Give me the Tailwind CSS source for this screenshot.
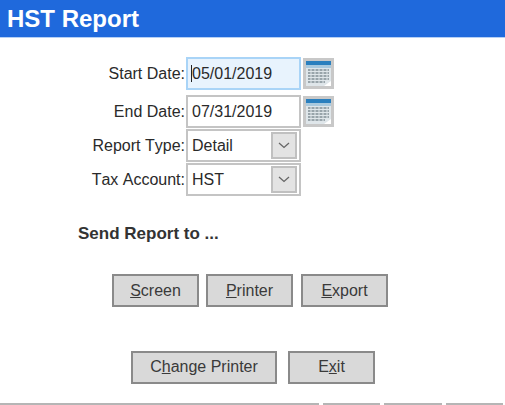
<!DOCTYPE html>
<html lang="en">
<head>
    <meta charset="UTF-8">
    <title>HST Report</title>
    <script src="https://cdn.jsdelivr.net/npm/@tailwindcss/browser@4"></script>
</head>
<body class="bg-white font-['Liberation_Sans',Arial,sans-serif] [font-kerning:none] text-[#2a2a2a] w-[505px] h-[405px] overflow-hidden flex flex-col">
    <div class="bg-[#1f69dc] h-[37px] pl-[7px] flex items-center text-white text-[24px] font-bold shrink-0">HST Report</div>
    <div class="h-px bg-[#b5d0f5] shrink-0"></div>

    <div class="flex flex-col items-start pl-[75px] pt-[19px] shrink-0">
        <!-- start date -->
        <div class="flex items-center h-[33px]">
            <span class="w-[111px] pr-px text-right text-[16px]">Start Date:</span>
            <div class="w-[115px] h-[33px] border-2 border-[#a9d4f7] bg-[#e8f3fd] flex items-center pl-[3px] text-[16px]"><span class="w-px h-[17px] bg-[#222]"></span>05/01/2019</div>
            <svg class="ml-[2px]" width="31" height="31" viewBox="0 0 31 31">
                <rect width="31" height="31" fill="#c8c8c8"/>
                <rect x="3" y="3" width="25" height="25" fill="#dfe6ea"/>
                <rect x="3" y="3" width="25" height="4" fill="#2a7fbe"/>
                <rect x="3" y="7" width="25" height="3" fill="#a9c9de"/>
                <path d="M5 12h21M5 15h21M5 18h21M5 21h21M5 24h17" stroke="#98a4aa" stroke-width="2"/>
                <path d="M8 11v15M12 11v15M16 11v15M20 11v15M24 11v11" stroke="#dfe6ea" stroke-width="1"/>
                <path d="M21 28l7-5v5z" fill="#fff"/>
            </svg>
        </div>
        <!-- end date -->
        <div class="flex items-center h-[33px] mt-[5px]">
            <span class="w-[111px] pr-px text-right text-[16px]">End Date:</span>
            <div class="w-[115px] h-[33px] border-2 border-[#c4c4c4] flex items-center pl-[4px] text-[16px]">07/31/2019</div>
            <svg class="ml-[2px]" width="31" height="31" viewBox="0 0 31 31">
                <rect width="31" height="31" fill="#c8c8c8"/>
                <rect x="3" y="3" width="25" height="25" fill="#dfe6ea"/>
                <rect x="3" y="3" width="25" height="4" fill="#2a7fbe"/>
                <rect x="3" y="7" width="25" height="3" fill="#a9c9de"/>
                <path d="M5 12h21M5 15h21M5 18h21M5 21h21M5 24h17" stroke="#98a4aa" stroke-width="2"/>
                <path d="M8 11v15M12 11v15M16 11v15M20 11v15M24 11v11" stroke="#dfe6ea" stroke-width="1"/>
                <path d="M21 28l7-5v5z" fill="#fff"/>
            </svg>
        </div>
        <!-- report type -->
        <div class="flex items-center h-[33px] mt-px">
            <span class="w-[111px] pr-px text-right text-[16px]">Report Type:</span>
            <div class="w-[115px] h-[33px] border-2 border-[#c4c4c4] flex items-center justify-between pl-[4px] pr-[2px] text-[16px]">
                <span>Detail</span>
                <span class="w-[26px] h-[27px] bg-[#e3e3e3] border-2 border-[#c0c0c0] flex items-center justify-center">
                    <svg width="12" height="7" viewBox="0 0 12 7" fill="none"><path d="M1 1l5 4.5L11 1" stroke="#666" stroke-width="1.3"/></svg>
                </span>
            </div>
        </div>
        <!-- tax account -->
        <div class="flex items-center h-[33px] mt-px">
            <span class="w-[111px] pr-px text-right text-[16px]">Tax Account:</span>
            <div class="w-[115px] h-[33px] border-2 border-[#c4c4c4] flex items-center justify-between pl-[4px] pr-[2px] text-[16px]">
                <span>HST</span>
                <span class="w-[26px] h-[27px] bg-[#e3e3e3] border-2 border-[#c0c0c0] flex items-center justify-center">
                    <svg width="12" height="7" viewBox="0 0 12 7" fill="none"><path d="M1 1l5 4.5L11 1" stroke="#666" stroke-width="1.3"/></svg>
                </span>
            </div>
        </div>
    </div>

    <div class="pl-[78px] mt-[29px] text-[17px] font-bold leading-[18px] text-[#333] shrink-0">Send Report to ...</div>

    <div class="flex pl-[112px] gap-[7px] mt-[31px] shrink-0">
        <button class="w-[87px] h-[33px] bg-[#d9d9d9] border-2 border-[#8a8a8a] text-[16px] text-[#3a3a3a]"><u>S</u>creen</button>
        <button class="w-[87px] h-[33px] bg-[#d9d9d9] border-2 border-[#8a8a8a] text-[16px] text-[#3a3a3a]"><u>P</u>rinter</button>
        <button class="w-[87px] h-[33px] ml-px bg-[#d9d9d9] border-2 border-[#8a8a8a] text-[16px] text-[#3a3a3a]"><u>E</u>xport</button>
    </div>

    <div class="flex pl-[131px] gap-[11px] mt-[44px] shrink-0">
        <button class="w-[146px] h-[33px] bg-[#d9d9d9] border-2 border-[#8a8a8a] text-[16px] text-[#3a3a3a] pb-[2px]">C<u>h</u>ange Printer</button>
        <button class="w-[87px] h-[33px] bg-[#d9d9d9] border-2 border-[#8a8a8a] text-[16px] text-[#3a3a3a] pb-[2px]">E<u>x</u>it</button>
    </div>

    <!-- status bar -->
    <div class="flex gap-[4px] mt-[19px] h-[2px] shrink-0">
        <div class="w-[319px] bg-[#b5b5b5]"></div>
        <div class="w-[57px] bg-[#b5b5b5]"></div>
        <div class="w-[58px] bg-[#b5b5b5]"></div>
        <div class="w-[57px] bg-[#b5b5b5]"></div>
    </div>
</body>
</html>
